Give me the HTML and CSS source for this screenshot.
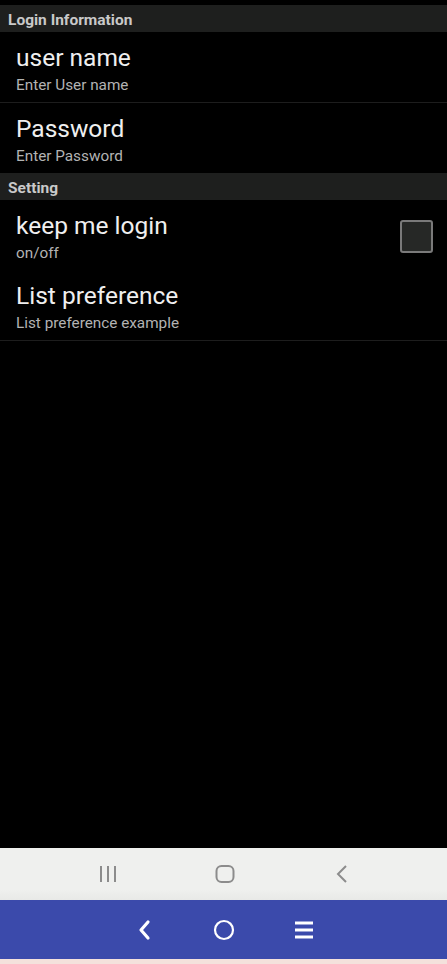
FILE: index.html
```html
<!DOCTYPE html>
<html>
<head>
<meta charset="utf-8">
<link rel="stylesheet" href="styles.css">
</head>
<body>
<div class="screen">
  <div class="top-gap"></div>
  <div class="category">Login Information</div>
  <div class="pref divided">
    <div class="texts">
      <div class="title">user name</div>
      <div class="summary">Enter User name</div>
    </div>
  </div>
  <div class="pref">
    <div class="texts">
      <div class="title">Password</div>
      <div class="summary">Enter Password</div>
    </div>
  </div>
  <div class="category">Setting</div>
  <div class="pref">
    <div class="texts">
      <div class="title">keep me login</div>
      <div class="summary">on/off</div>
    </div>
    <div class="checkbox"></div>
  </div>
  <div class="pref divided">
    <div class="texts">
      <div class="title">List preference</div>
      <div class="summary">List preference example</div>
    </div>
  </div>
  <div class="spacer"></div>
  <div class="sysnav">
    <svg class="ic" width="20" height="18" viewBox="0 0 20 18"><g stroke="#8c8c8c" stroke-width="2"><line x1="3" y1="1" x2="3" y2="17"/><line x1="10" y1="1" x2="10" y2="17"/><line x1="17" y1="1" x2="17" y2="17"/></g></svg>
    <svg class="ic" width="20" height="18" viewBox="0 0 20 18"><rect x="1.5" y="1" width="17" height="16" rx="5" fill="none" stroke="#8c8c8c" stroke-width="2"/></svg>
    <svg class="ic" width="20" height="18" viewBox="0 0 20 18"><polyline points="14,1 6,9 14,17" fill="none" stroke="#8c8c8c" stroke-width="2"/></svg>
  </div>
  <div class="appnav">
    <svg width="22" height="22" viewBox="0 0 22 22"><polyline points="14,3 7,11 14,19" fill="none" stroke="#fff" stroke-width="3.2" stroke-linecap="round" stroke-linejoin="round"/></svg>
    <svg width="22" height="22" viewBox="0 0 22 22"><circle cx="11" cy="11" r="9" fill="none" stroke="#fff" stroke-width="2.2"/></svg>
    <svg width="22" height="22" viewBox="0 0 22 22"><g stroke="#fff" stroke-width="3"><line x1="3" y1="4" x2="21" y2="4"/><line x1="3" y1="11" x2="21" y2="11"/><line x1="3" y1="18" x2="21" y2="18"/></g></svg>
  </div>
  <div class="bottom-strip"></div>
</div>
</body>
</html>
```
FILE: styles.css
```css
html, body {
  margin: 0;
  padding: 0;
  background: #000;
}
.screen {
  display: flex;
  flex-direction: column;
  height: 964px;
  width: 447px;
  font-family: Roboto, "Noto Sans", sans-serif;
  background: #000;
}
.top-gap {
  height: 5px;
  flex: none;
}
.category {
  flex: none;
  height: 27px;
  box-sizing: border-box;
  padding: 3px 0 0 8px;
  line-height: 24px;
  font-size: 15.5px;
  font-weight: bold;
  color: #c9c9c9;
  background: #1e1f1e;
}
.pref {
  flex: none;
  height: 70px;
  box-sizing: border-box;
  padding: 12px 14px 0 16px;
  display: flex;
  align-items: flex-start;
  justify-content: space-between;
}
.pref.divided {
  height: 71px;
  border-bottom: 1px solid #1d1d1d;
}
.title {
  font-size: 24.5px;
  line-height: 28px;
  color: #efefef;
}
.summary {
  margin-top: 5px;
  font-size: 15.3px;
  line-height: 17px;
  color: #b3b3b3;
}
.checkbox {
  width: 29px;
  height: 29px;
  margin-top: 8px;
  border: 2px solid #7a7a7a;
  border-radius: 3px;
  background: #262826;
}
.spacer {
  flex: 1;
}
.sysnav {
  flex: none;
  height: 52px;
  background: linear-gradient(#eff0ee 80%, #e8e9e7);
  display: flex;
  align-items: center;
  justify-content: center;
  gap: 97px;
  padding-left: 2px;
}
.appnav {
  flex: none;
  height: 59px;
  background: #3b4aab;
  display: flex;
  align-items: center;
  justify-content: center;
  gap: 57px;
  padding-left: 1px;
}
.bottom-strip {
  flex: none;
  height: 5px;
  background: #f4e1dc;
}
```
